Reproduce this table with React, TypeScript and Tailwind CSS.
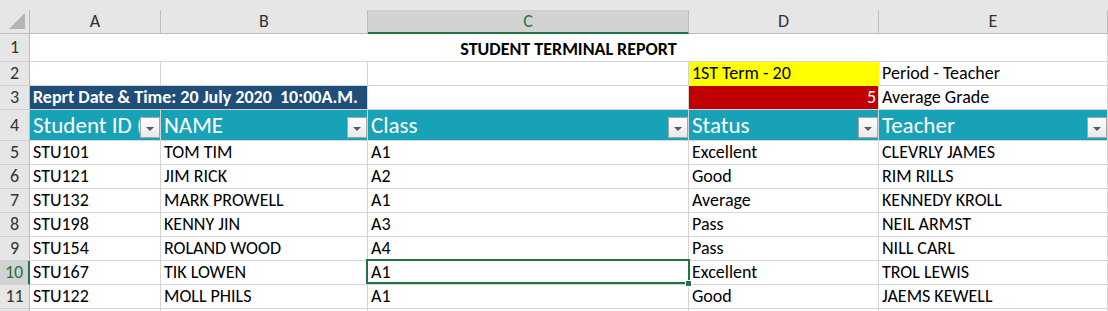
import React from "react";

const rows = [
  ["STU101", "TOM TIM", "A1", "Excellent", "CLEVRLY JAMES"],
  ["STU121", "JIM RICK", "A2", "Good", "RIM RILLS"],
  ["STU132", "MARK PROWELL", "A1", "Average", "KENNEDY KROLL"],
  ["STU198", "KENNY JIN", "A3", "Pass", "NEIL ARMST"],
  ["STU154", "ROLAND WOOD", "A4", "Pass", "NILL CARL"],
  ["STU167", "TIK LOWEN", "A1", "Excellent", "TROL LEWIS"],
  ["STU122", "MOLL PHILS", "A1", "Good", "JAEMS KEWELL"],
];

const widths = ["w-[131px]", "w-[207px]", "w-[321px]", "w-[190px]", "w-[229px]"];
const headers = ["Student ID (", "NAME", "Class", "Status", "Teacher"];

function RowHead({ n, active }: { n?: number; active?: boolean }) {
  return (
    <div
      className={
        "flex h-full w-[30px] shrink-0 items-center justify-center border-b border-[#d0d0d0] text-[18px] " +
        (active
          ? "border-r-2 border-r-[#217346] bg-[#d2d2d2] text-[#217346]"
          : "border-r border-r-[#bcbcbc] bg-[#e6e6e6] text-[#333]")
      }
    >
      {n}
    </div>
  );
}

function Cell({ w, children, className = "" }: { w: string; children?: React.ReactNode; className?: string }) {
  return (
    <div
      className={
        "relative flex h-full shrink-0 items-center whitespace-nowrap border-r border-b border-[#d4d4d4] pl-[3px] " +
        w +
        " " +
        className
      }
    >
      {children}
    </div>
  );
}

function Filter() {
  return (
    <span className="absolute right-0 top-[7px] flex h-[21px] w-[20px] items-center justify-center border border-[#a6a6a6] bg-gradient-to-b from-white to-[#e9e9e9]">
      <span className="mt-[2px] h-0 w-0 border-x-[4px] border-t-[4px] border-x-transparent border-t-[#5a5a5a]" />
    </span>
  );
}

export default function App() {
  return (
    <div className="h-[311px] w-[1108px] overflow-hidden bg-white font-['Carlito','Calibri','Lato',sans-serif] text-black">
      <div className="h-[10px] bg-[#e6e6e6]" />

      {/* column headers */}
      <div className="flex h-[24px] bg-[#e6e6e6] text-[18px] text-[#333]">
        <div className="relative h-full w-[30px] shrink-0 border-r border-b border-[#bcbcbc]">
          <span className="absolute left-[9px] top-[3px] h-0 w-0 border-l-[16px] border-b-[16px] border-l-transparent border-b-[#b4b4b4]" />
        </div>
        {["A", "B", "C", "D", "E"].map((c, i) =>
          c === "C" ? (
            <div
              key={c}
              className={"flex h-full shrink-0 items-center justify-center border-r border-[#bcbcbc] border-b-2 border-b-[#217346] bg-[#d2d2d2] text-[#217346] " + widths[i]}
            >
              {c}
            </div>
          ) : (
            <div
              key={c}
              className={"flex h-full shrink-0 items-center justify-center border-r border-b border-[#bcbcbc] " + widths[i]}
            >
              {c}
            </div>
          )
        )}
      </div>

      {/* row 1 */}
      <div className="flex h-[28px] text-[18px]">
        <RowHead n={1} />
        <div className="flex h-full w-[1078px] items-center justify-center border-r border-b border-[#d4d4d4] pt-[3px] font-bold">
          STUDENT TERMINAL REPORT
        </div>
      </div>

      {/* row 2 */}
      <div className="flex h-[24px] text-[18px]">
        <RowHead n={2} />
        <Cell w={widths[0]} />
        <Cell w={widths[1]} />
        <Cell w={widths[2]} />
        <Cell w={widths[3]} className="border-[#ffff00] bg-[#ffff00]">1ST Term - 20</Cell>
        <Cell w={widths[4]}>Period - Teacher</Cell>
      </div>

      {/* row 3 */}
      <div className="flex h-[24px] text-[18px]">
        <RowHead n={3} />
        <Cell w="w-[338px]" className="border-[#1f4e79] bg-[#1f4e79] font-bold text-white">
          Reprt Date &amp; Time: 20 July 2020&nbsp; 10:00A.M.
        </Cell>
        <Cell w={widths[2]} />
        <Cell w={widths[3]} className="justify-end border-[#c00000] bg-[#c00000] pr-[2px] text-white">
          5
        </Cell>
        <Cell w={widths[4]}>Average Grade</Cell>
      </div>

      {/* row 4 table header */}
      <div className="flex h-[31px] text-[23px]">
        <RowHead n={4} />
        {headers.map((h, i) => (
          <Cell key={h} w={widths[i]} className="overflow-hidden border-[#17a2b8] bg-[#17a2b8] text-white">
            {h}
            <Filter />
          </Cell>
        ))}
      </div>

      {/* data rows */}
      {rows.map((r, ri) => (
        <div key={r[0]} className="flex h-[24px] text-[18px]">
          <RowHead n={ri + 5} active={ri === 5} />
          {r.map((v, i) => (
            <Cell key={i} w={widths[i]}>
              {v}
              {ri === 5 && i === 2 && (
                <>
                  <span className="pointer-events-none absolute -left-[2px] -top-[2px] z-10 h-[25px] w-[324px] border-2 border-[#217346]" />
                  <span className="absolute left-[317px] top-[19px] z-10 h-[7px] w-[7px] border border-white bg-[#217346]" />
                </>
              )}
            </Cell>
          ))}
        </div>
      ))}

      {/* row 12 partial */}
      <div className="flex h-[24px] text-[18px]">
        <RowHead />
        {widths.map((w) => (
          <Cell key={w} w={w} />
        ))}
      </div>
    </div>
  );
}
